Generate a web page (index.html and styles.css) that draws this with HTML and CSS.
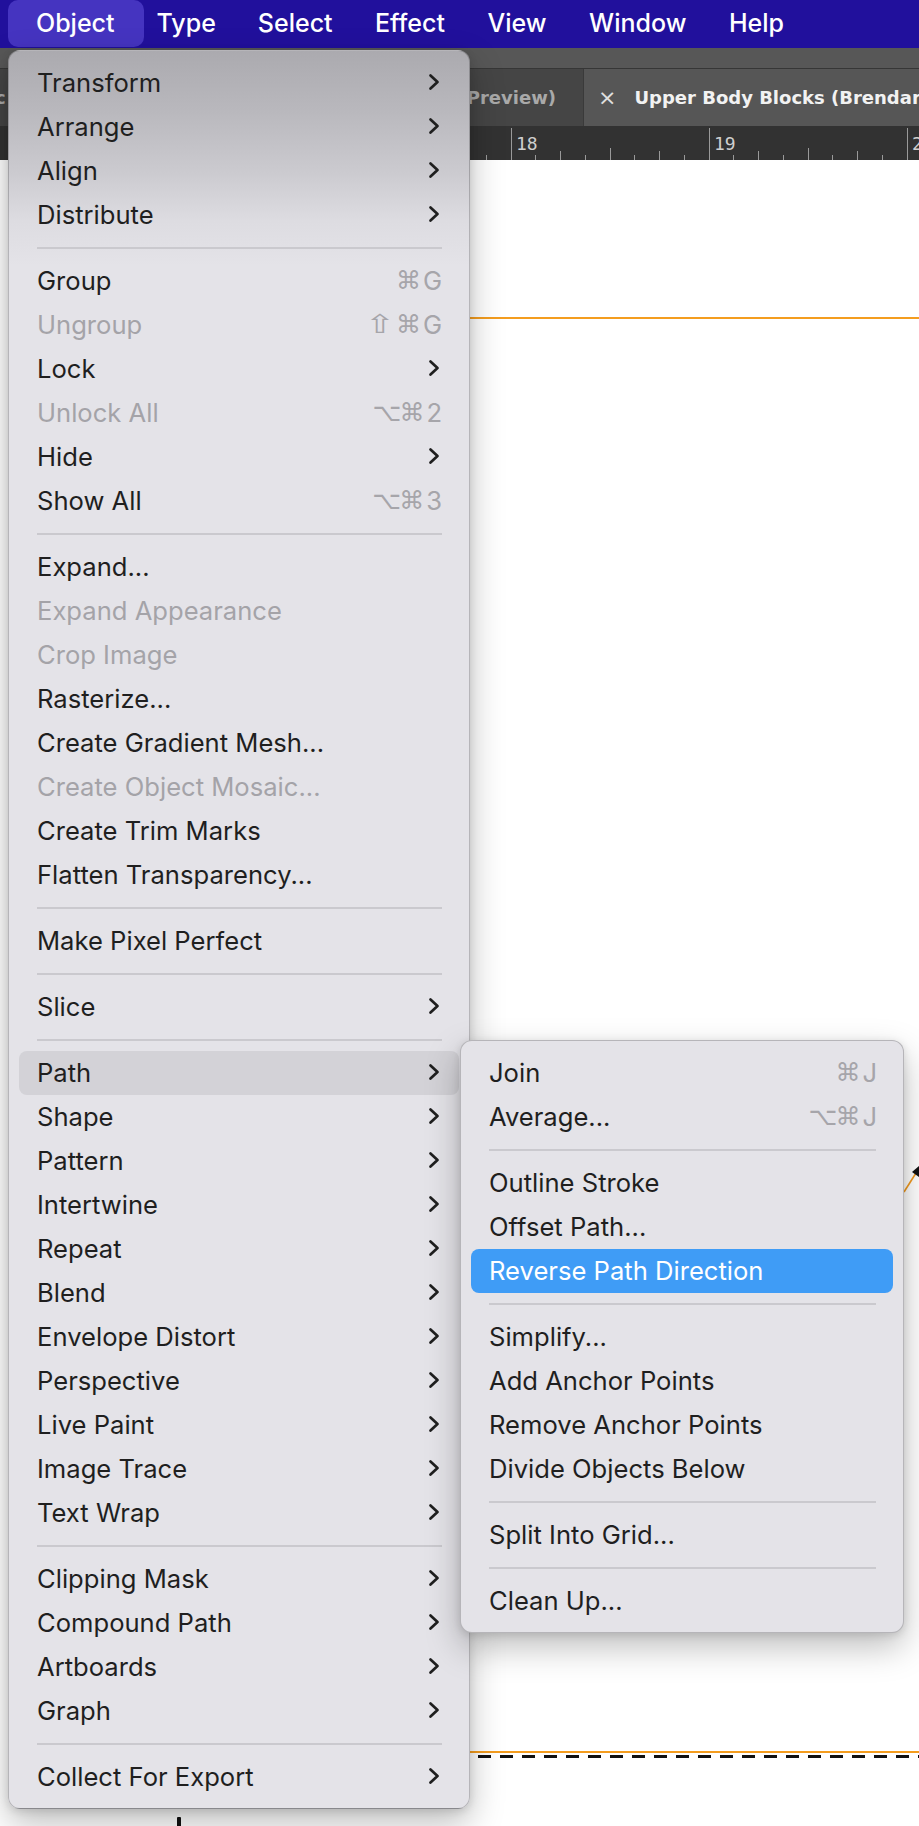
FILE: index.html
```html
<!DOCTYPE html>
<html>
<head>
<meta charset="utf-8">
<link rel="stylesheet" href="styles.css">
</head>
<body>
<header class="menubar">
  <span class="mb-item active">Object</span>
  <span class="mb-item">Type</span>
  <span class="mb-item">Select</span>
  <span class="mb-item">Effect</span>
  <span class="mb-item">View</span>
  <span class="mb-item">Window</span>
  <span class="mb-item">Help</span>
</header>
<div class="tabstrip"></div>
<div class="tabs">
  <div class="tab tab-inactive"><span class="cut">c</span><span>Preview)</span></div>
  <div class="tab tab-active"><span class="close">×</span><span>Upper Body Blocks (Brendan</span></div>
</div>
<div class="ruler">
  <svg class="ruler-svg" width="919" height="34" viewBox="0 0 919 34">
    <g stroke="#9a9a9a" stroke-width="1">
      <line x1="511.5" y1="2" x2="511.5" y2="34"/>
      <line x1="709.5" y1="2" x2="709.5" y2="34"/>
      <line x1="907.5" y1="2" x2="907.5" y2="34"/>
      <line x1="486.5" y1="29" x2="486.5" y2="34"/>
      <line x1="535.5" y1="29" x2="535.5" y2="34"/>
      <line x1="560.5" y1="25" x2="560.5" y2="34"/>
      <line x1="585.5" y1="29" x2="585.5" y2="34"/>
      <line x1="610.5" y1="22" x2="610.5" y2="34"/>
      <line x1="634.5" y1="29" x2="634.5" y2="34"/>
      <line x1="659.5" y1="25" x2="659.5" y2="34"/>
      <line x1="684.5" y1="29" x2="684.5" y2="34"/>
      <line x1="733.5" y1="29" x2="733.5" y2="34"/>
      <line x1="758.5" y1="25" x2="758.5" y2="34"/>
      <line x1="783.5" y1="29" x2="783.5" y2="34"/>
      <line x1="808.5" y1="22" x2="808.5" y2="34"/>
      <line x1="832.5" y1="29" x2="832.5" y2="34"/>
      <line x1="857.5" y1="25" x2="857.5" y2="34"/>
      <line x1="882.5" y1="29" x2="882.5" y2="34"/>
    </g>
    <g class="ruler-num">
      <text x="516" y="24">18</text>
      <text x="714" y="24">19</text>
      <text x="912" y="24">20</text>
    </g>
  </svg>
</div>
<main class="canvas">
  <div class="art art-orange-top"></div>
  <div class="art art-orange-bottom"></div>
  <div class="art art-dash"></div>
  <svg class="art art-diag" width="24" height="40" viewBox="0 0 24 40">
    <line x1="9" y1="32" x2="21" y2="13" stroke="#f29a1f" stroke-width="1.6"/>
    <path d="M17 12 L24 6 L24 17 Z" fill="#111"/>
  </svg>
  <div class="art art-mark"></div>
</main>

<nav class="menu menu-main">
  <div class="item"><span class="label">Transform</span><svg class="chev" width="12" height="18" viewBox="0 0 12 18"><polyline points="2.5,2.5 9.5,9 2.5,15.5"/></svg></div>
  <div class="item"><span class="label">Arrange</span><svg class="chev" width="12" height="18" viewBox="0 0 12 18"><polyline points="2.5,2.5 9.5,9 2.5,15.5"/></svg></div>
  <div class="item"><span class="label">Align</span><svg class="chev" width="12" height="18" viewBox="0 0 12 18"><polyline points="2.5,2.5 9.5,9 2.5,15.5"/></svg></div>
  <div class="item"><span class="label">Distribute</span><svg class="chev" width="12" height="18" viewBox="0 0 12 18"><polyline points="2.5,2.5 9.5,9 2.5,15.5"/></svg></div>
  <div class="sep"></div>
  <div class="item"><span class="label">Group</span><span class="sc"><span class="k">⌘</span><span>G</span></span></div>
  <div class="item disabled"><span class="label">Ungroup</span><span class="sc"><span class="k shift">⇧</span><span class="k">⌘</span><span>G</span></span></div>
  <div class="item"><span class="label">Lock</span><svg class="chev" width="12" height="18" viewBox="0 0 12 18"><polyline points="2.5,2.5 9.5,9 2.5,15.5"/></svg></div>
  <div class="item disabled"><span class="label">Unlock All</span><span class="sc"><span class="k">⌥</span><span class="k">⌘</span><span>2</span></span></div>
  <div class="item"><span class="label">Hide</span><svg class="chev" width="12" height="18" viewBox="0 0 12 18"><polyline points="2.5,2.5 9.5,9 2.5,15.5"/></svg></div>
  <div class="item"><span class="label">Show All</span><span class="sc"><span class="k">⌥</span><span class="k">⌘</span><span>3</span></span></div>
  <div class="sep"></div>
  <div class="item"><span class="label">Expand...</span></div>
  <div class="item disabled"><span class="label">Expand Appearance</span></div>
  <div class="item disabled"><span class="label">Crop Image</span></div>
  <div class="item"><span class="label">Rasterize...</span></div>
  <div class="item"><span class="label">Create Gradient Mesh...</span></div>
  <div class="item disabled"><span class="label">Create Object Mosaic...</span></div>
  <div class="item"><span class="label">Create Trim Marks</span></div>
  <div class="item"><span class="label">Flatten Transparency...</span></div>
  <div class="sep"></div>
  <div class="item"><span class="label">Make Pixel Perfect</span></div>
  <div class="sep"></div>
  <div class="item"><span class="label">Slice</span><svg class="chev" width="12" height="18" viewBox="0 0 12 18"><polyline points="2.5,2.5 9.5,9 2.5,15.5"/></svg></div>
  <div class="sep"></div>
  <div class="item hover"><span class="label">Path</span><svg class="chev" width="12" height="18" viewBox="0 0 12 18"><polyline points="2.5,2.5 9.5,9 2.5,15.5"/></svg></div>
  <div class="item"><span class="label">Shape</span><svg class="chev" width="12" height="18" viewBox="0 0 12 18"><polyline points="2.5,2.5 9.5,9 2.5,15.5"/></svg></div>
  <div class="item"><span class="label">Pattern</span><svg class="chev" width="12" height="18" viewBox="0 0 12 18"><polyline points="2.5,2.5 9.5,9 2.5,15.5"/></svg></div>
  <div class="item"><span class="label">Intertwine</span><svg class="chev" width="12" height="18" viewBox="0 0 12 18"><polyline points="2.5,2.5 9.5,9 2.5,15.5"/></svg></div>
  <div class="item"><span class="label">Repeat</span><svg class="chev" width="12" height="18" viewBox="0 0 12 18"><polyline points="2.5,2.5 9.5,9 2.5,15.5"/></svg></div>
  <div class="item"><span class="label">Blend</span><svg class="chev" width="12" height="18" viewBox="0 0 12 18"><polyline points="2.5,2.5 9.5,9 2.5,15.5"/></svg></div>
  <div class="item"><span class="label">Envelope Distort</span><svg class="chev" width="12" height="18" viewBox="0 0 12 18"><polyline points="2.5,2.5 9.5,9 2.5,15.5"/></svg></div>
  <div class="item"><span class="label">Perspective</span><svg class="chev" width="12" height="18" viewBox="0 0 12 18"><polyline points="2.5,2.5 9.5,9 2.5,15.5"/></svg></div>
  <div class="item"><span class="label">Live Paint</span><svg class="chev" width="12" height="18" viewBox="0 0 12 18"><polyline points="2.5,2.5 9.5,9 2.5,15.5"/></svg></div>
  <div class="item"><span class="label">Image Trace</span><svg class="chev" width="12" height="18" viewBox="0 0 12 18"><polyline points="2.5,2.5 9.5,9 2.5,15.5"/></svg></div>
  <div class="item"><span class="label">Text Wrap</span><svg class="chev" width="12" height="18" viewBox="0 0 12 18"><polyline points="2.5,2.5 9.5,9 2.5,15.5"/></svg></div>
  <div class="sep"></div>
  <div class="item"><span class="label">Clipping Mask</span><svg class="chev" width="12" height="18" viewBox="0 0 12 18"><polyline points="2.5,2.5 9.5,9 2.5,15.5"/></svg></div>
  <div class="item"><span class="label">Compound Path</span><svg class="chev" width="12" height="18" viewBox="0 0 12 18"><polyline points="2.5,2.5 9.5,9 2.5,15.5"/></svg></div>
  <div class="item"><span class="label">Artboards</span><svg class="chev" width="12" height="18" viewBox="0 0 12 18"><polyline points="2.5,2.5 9.5,9 2.5,15.5"/></svg></div>
  <div class="item"><span class="label">Graph</span><svg class="chev" width="12" height="18" viewBox="0 0 12 18"><polyline points="2.5,2.5 9.5,9 2.5,15.5"/></svg></div>
  <div class="sep"></div>
  <div class="item"><span class="label">Collect For Export</span><svg class="chev" width="12" height="18" viewBox="0 0 12 18"><polyline points="2.5,2.5 9.5,9 2.5,15.5"/></svg></div>
</nav>

<nav class="menu menu-sub">
  <div class="item"><span class="label">Join</span><span class="sc"><span class="k">⌘</span><span>J</span></span></div>
  <div class="item"><span class="label">Average...</span><span class="sc"><span class="k">⌥</span><span class="k">⌘</span><span>J</span></span></div>
  <div class="sep"></div>
  <div class="item"><span class="label">Outline Stroke</span></div>
  <div class="item"><span class="label">Offset Path...</span></div>
  <div class="item selected"><span class="label">Reverse Path Direction</span></div>
  <div class="sep"></div>
  <div class="item"><span class="label">Simplify...</span></div>
  <div class="item"><span class="label">Add Anchor Points</span></div>
  <div class="item"><span class="label">Remove Anchor Points</span></div>
  <div class="item"><span class="label">Divide Objects Below</span></div>
  <div class="sep"></div>
  <div class="item"><span class="label">Split Into Grid...</span></div>
  <div class="sep"></div>
  <div class="item"><span class="label">Clean Up...</span></div>
</nav>
</body>
</html>
```

FILE: styles.css
```css
* { box-sizing: border-box; margin: 0; padding: 0; }
html, body { width: 919px; height: 1826px; overflow: hidden; background: #fff; }
body {
  font-family: Inter, "Noto Sans", sans-serif;
  position: relative;
  display: flex;
  flex-direction: column;
}

/* ---------- macOS menu bar ---------- */
.menubar {
  height: 48px;
  flex: 0 0 48px;
  background: #21109c;
  display: flex;
  align-items: center;
  padding-left: 15px;
  color: #fff;
  font-size: 25px;
  font-weight: 500;
}
.mb-item {
  padding: 0 21px 2px;
  height: 48px;
  display: flex;
  align-items: center;
}
.mb-item:nth-child(n+4) { padding: 0 21.3px 2px; }
.mb-item.active {
  background: #4534c0;
  border-radius: 10px;
  padding: 0 29px 1px 28px;
  margin: 0 -8px 0 -7px;
  height: 47px;
  align-self: flex-start;
}

/* ---------- document tabs ---------- */
.tabstrip {
  flex: 0 0 21px;
  background: #575757;
  border-bottom: 1px solid #363636;
}
.tabs {
  flex: 0 0 57px;
  display: flex;
  background: #454545;
  font-family: "DejaVu Sans", sans-serif;
  font-weight: bold;
  font-size: 18px;
}
.tab {
  display: flex;
  align-items: center;
  white-space: nowrap;
  overflow: hidden;
}
.tab-inactive {
  flex: 0 0 583px;
  justify-content: space-between;
  padding-right: 27px;
  color: #a9a9a9;
}
.tab-inactive .cut { margin-left: -5px; }
.tab-active {
  flex: 1;
  background: #565656;
  border-left: 1px solid #3a3a3a;
  padding-left: 14px;
  color: #f2f2f2;
}
.tab-active .close {
  font-weight: normal;
  font-size: 22px;
  color: #e0e0e0;
  margin-right: 18px;
}

/* ---------- ruler ---------- */
.ruler {
  flex: 0 0 34px;
  background: #323232;
}
.ruler-svg { display: block; }
.ruler-num text {
  fill: #cfcfcf;
  font-family: "DejaVu Sans Mono", monospace;
  font-size: 18px;
}

/* ---------- canvas ---------- */
.canvas {
  flex: 1;
  background: #fff;
  position: relative;
}
.art { position: absolute; }
.art-orange-top {
  left: 470px; right: 0; top: 157px; height: 2px;
  background: #f49d1f;
}
.art-orange-bottom {
  left: 470px; right: 0; top: 1591px; height: 2px;
  background: #f49d1f;
}
.art-dash {
  left: 478px; right: 0; top: 1595px; height: 3px;
  background: repeating-linear-gradient(to right, #111 0 13px, transparent 13px 22px);
}
.art-diag { left: 895px; top: 1000px; }
.art-mark {
  left: 177px; top: 1657px; width: 4px; height: 10px;
  background: #111;
  border-radius: 1px 1px 0 0;
}

/* ---------- menus ---------- */
.menu {
  position: absolute;
  background: #e4e3e8;
  border: 1px solid rgba(0, 0, 0, 0.2);
  border-radius: 12px;
  box-shadow: 0 14px 34px rgba(0, 0, 0, 0.26), 0 2px 8px rgba(0, 0, 0, 0.12);
  padding: 10px 10px 9px;
  font-size: 25.6px;
  color: #1f1f1f;
}
.menu-main {
  left: 8px;
  top: 50px;
  width: 462px;
  background: linear-gradient(#abaaaf 0, #b9b8bd 60px, #cbcacf 120px, #dddce1 170px, #e4e3e8 215px, #e4e3e8 100%);
}
.menu-sub {
  left: 460px;
  top: 1040px;
  width: 444px;
}
.item {
  height: 44px;
  display: flex;
  align-items: center;
  padding: 0 19px 2px 18px;
  border-radius: 8px;
  white-space: nowrap;
}
.item .label { flex: 1; }
.item.disabled { color: #a4a3a8; }
.item.hover { background: #d3d2d7; }
.item.selected { background: #3f9cf6; color: #fff; }
.chev { display: block; flex: 0 0 12px; }
.chev polyline {
  fill: none;
  stroke: #1f1f1f;
  stroke-width: 2.7;
  stroke-linecap: round;
  stroke-linejoin: round;
}
.sc {
  display: flex;
  align-items: center;
  gap: 5px;
  color: #a6a5aa;
  margin-right: -2px;
}
.sc .k {
  font-family: "DejaVu Sans", sans-serif;
  font-size: 25px;
  width: 22px;
  text-align: center;
}
.sc .k.shift {
  display: inline-block;
  transform: scale(1.45, 1.05);
}
.menu-sub .item { padding: 0 18px 2px 18px; }
.sep {
  height: 2px;
  margin: 10px 17px 10px 18px;
  background: #cac9ce;
}
```
